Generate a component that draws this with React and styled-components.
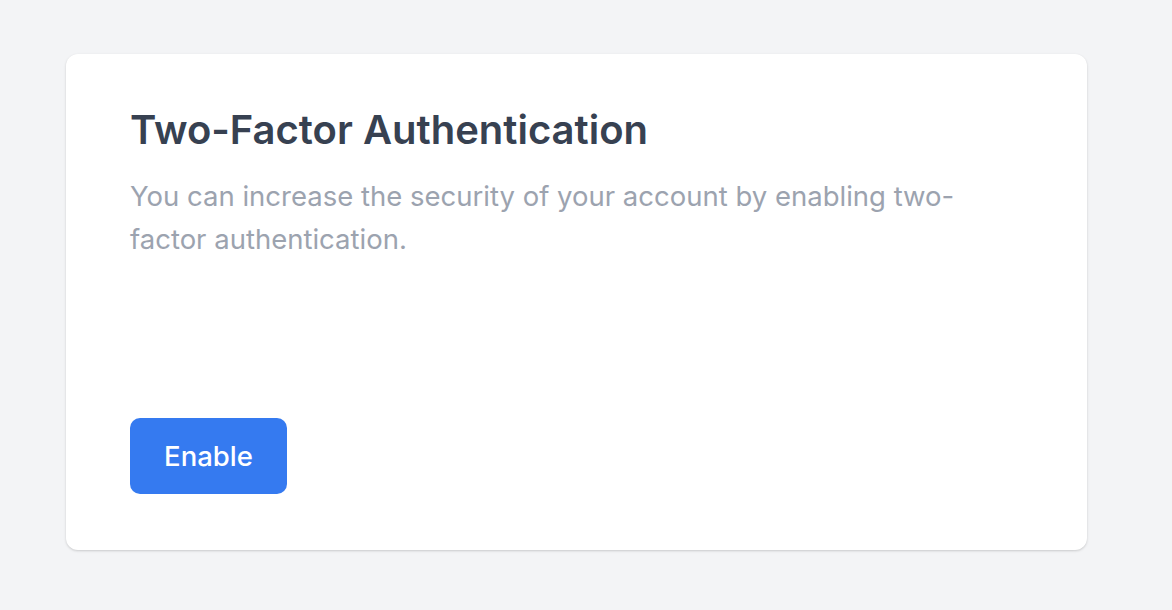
import React from "react";
import styled, { createGlobalStyle } from "styled-components";

const GlobalStyle = createGlobalStyle`
  html, body {
    margin: 0;
    padding: 0;
    background: #f3f4f6;
    font-family: Inter, "Noto Sans", sans-serif;
  }
`;

const Page = styled.div`
  min-height: 610px;
  box-sizing: border-box;
  padding: 54px 85px 60px 66px;
`;

const Card = styled.section`
  background: #ffffff;
  border-radius: 12px;
  box-shadow: 0 1px 3px rgba(0, 0, 0, 0.12), 0 1px 2px rgba(0, 0, 0, 0.06);
  height: 496px;
  box-sizing: border-box;
  padding: 52px 64px 56px 64px;
  display: flex;
  flex-direction: column;
`;

const Title = styled.h2`
  margin: 0;
  font-size: 40px;
  line-height: 48px;
  font-weight: 600;
  color: #374151;
`;

const Description = styled.p`
  margin: 21px 0 0;
  max-width: 860px;
  font-size: 27.5px;
  line-height: 43px;
  font-weight: 400;
  color: #9ca3af;
`;

const Actions = styled.div`
  margin-top: auto;
  display: flex;
`;

const Button = styled.button`
  height: 76px;
  width: 157px;
  padding: 0;
  border: none;
  border-radius: 10px;
  background: #357af0;
  color: #ffffff;
  font-family: inherit;
  font-size: 27.5px;
  font-weight: 500;
  cursor: pointer;
`;

export default function App() {
  return (
    <>
      <GlobalStyle />
      <Page>
        <Card>
          <Title>Two-Factor Authentication</Title>
          <Description>
            You can increase the security of your account by enabling two-factor authentication.
          </Description>
          <Actions>
            <Button>Enable</Button>
          </Actions>
        </Card>
      </Page>
    </>
  );
}
